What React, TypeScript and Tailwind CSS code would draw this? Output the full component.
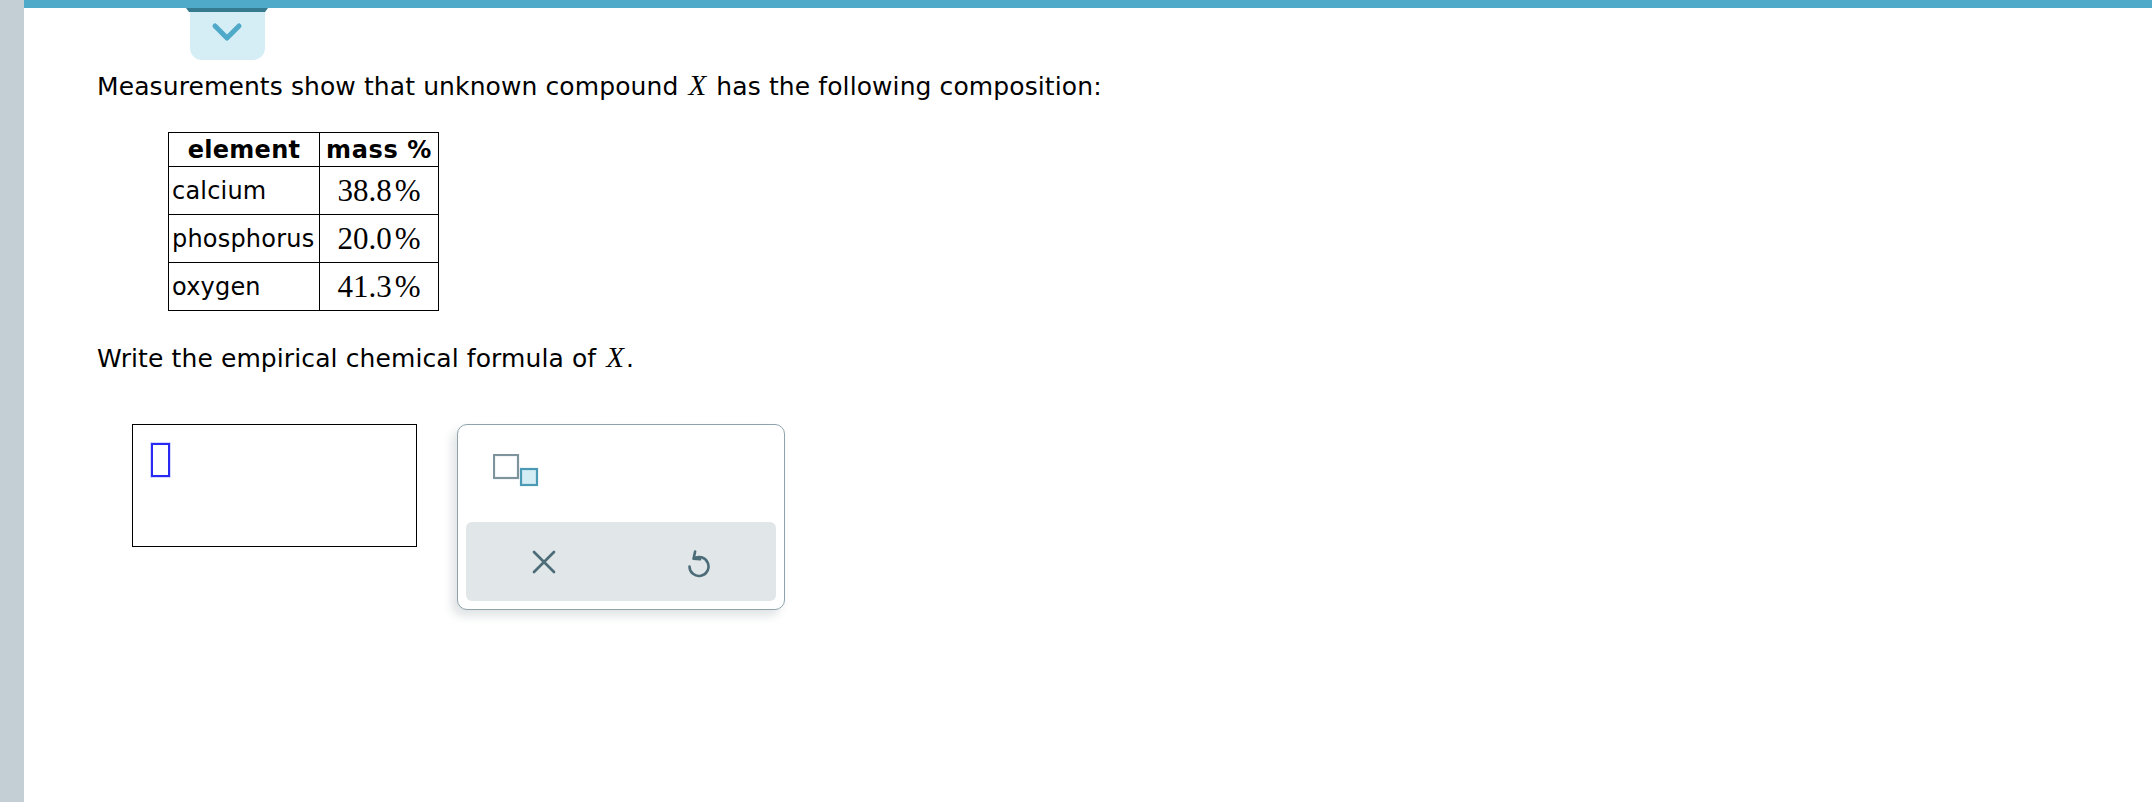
const rows = [
  { name: "calcium", value: "38.8" },
  { name: "phosphorus", value: "20.0" },
  { name: "oxygen", value: "41.3" },
];

function MathX() {
  return <span className="mx-[2px] font-['Liberation_Serif',serif] italic text-[29px] leading-none">X</span>;
}

export default function App() {
  return (
    <div className="flex h-[802px] w-full bg-white font-['DejaVu_Sans',Verdana,sans-serif] text-[24px] text-black">
      <div className="w-[24px] shrink-0 bg-[#c3cfd4]" />
      <div className="flex flex-1 flex-col">
        <div className="h-[8px] bg-[#4fa9c8]" />
        {/* collapse tab */}
        <div className="ml-[162px] flex w-[82px] flex-col items-center">
          <div className="h-[4px] w-full bg-[#357a8e] [clip-path:polygon(0_0,100%_0,calc(100%-3px)_100%,3px_100%)]" />
          <div className="flex h-[48px] w-[75px] items-center justify-center rounded-b-[12px] bg-[#d5edf4] pb-[6px]">
            <svg width="32" height="22" viewBox="0 0 32 22">
              <path d="M4 4 L16 16 L28 4" fill="none" stroke="#4fa9c8" strokeWidth="5" strokeLinecap="round" strokeLinejoin="round" />
            </svg>
          </div>
        </div>

        <div className="pl-[73px]">
          <p className="mt-[9px] text-[25px] leading-[36px] tracking-[0.1px]">
            Measurements show that unknown compound <MathX /> has the following composition:
          </p>

          <table className="ml-[71px] mt-[27px] border-collapse">
            <thead>
              <tr className="h-[34px]">
                <th className="w-[151px] border border-black px-[3px] py-0 text-center font-bold leading-none tracking-[0.3px]">element</th>
                <th className="w-[119px] border border-black px-[1px] py-0 text-center font-bold leading-none tracking-[0.6px]">mass %</th>
              </tr>
            </thead>
            <tbody>
              {rows.map((r) => (
                <tr key={r.name} className="h-[48px]">
                  <td className="border border-black px-[3px] py-0 text-left leading-none tracking-[0.2px]">{r.name}</td>
                  <td className="border border-black px-[2px] py-0 text-center font-['Liberation_Serif',serif] text-[31px] leading-none">
                    {r.value}
                    <span className="ml-[3px]">%</span>
                  </td>
                </tr>
              ))}
            </tbody>
          </table>

          <p className="mt-[30px] text-[25px] leading-[36px] tracking-[0.1px]">
            Write the empirical chemical formula of <MathX />.
          </p>

          <div className="mt-[47px] flex items-start gap-[40px] pl-[35px]">
            {/* answer box */}
            <div className="h-[123px] w-[285px] border border-black pl-[18px] pt-[18px]">
              <div className="h-[34px] w-[19px] border-2 border-[#2a2af5] shadow-[0_0_0_1px_rgba(90,90,255,0.25)]" />
            </div>

            {/* toolbar panel */}
            <div className="flex h-[186px] w-[328px] flex-col rounded-[10px] border border-[#8fa3ad] bg-white px-[8px] pb-[8px] shadow-[-5px_6px_10px_rgba(60,80,90,0.16)]">
              <div className="flex flex-1 items-start pl-[27px] pt-[29px]">
                <svg width="46" height="34" viewBox="0 0 46 34">
                  <rect x="1" y="1" width="24" height="23" fill="#fff" stroke="#7f939c" strokeWidth="2.2" />
                  <rect x="28" y="15" width="16" height="16" fill="#d4ecf3" stroke="#4b9ab5" strokeWidth="2.2" />
                </svg>
              </div>
              <div className="flex h-[79px] rounded-[6px] bg-[#e1e6e9]">
                <div className="flex flex-1 items-center justify-center">
                  <svg width="24" height="24" viewBox="0 0 24 24">
                    <path d="M2 2 L22 22 M22 2 L2 22" fill="none" stroke="#4c6c78" strokeWidth="2.7" strokeLinecap="round" />
                  </svg>
                </div>
                <div className="flex flex-1 items-center justify-center">
                  <svg width="26" height="32" viewBox="0 0 26 32">
                    <path
                      d="M9.1 5.6 L7.55 12.72 L14 13.3 M7.55 12.72 A9.5 9.5 0 1 1 3.5 20.5"
                      fill="none"
                      stroke="#4c6c78"
                      strokeWidth="2.6"
                      strokeLinecap="round"
                      strokeLinejoin="round"
                    />
                  </svg>
                </div>
              </div>
            </div>
          </div>
        </div>
      </div>
    </div>
  );
}
